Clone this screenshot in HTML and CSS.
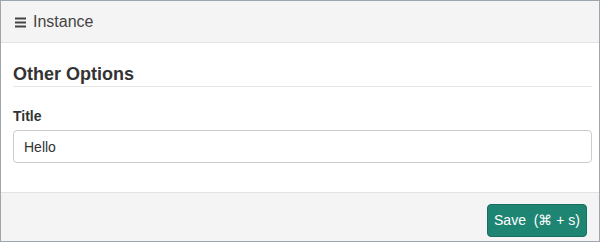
FILE: index.html
```html
<!DOCTYPE html>
<html>
<head>
 <meta charset="utf-8">
 <title>Instance</title>
 <link rel="stylesheet" href="styles.css">
</head>
<body>
<div class="Panel">
 <div class="PanelHeading">
  <svg class="MenuIcon" width="11" height="11" viewBox="0 0 11 11"><rect x="0" y="0.5" width="11" height="2" /><rect x="0" y="4.5" width="11" height="2" /><rect x="0" y="8.5" width="11" height="2" /></svg>
  <span>Instance</span>
 </div>
 <div class="PanelBody">
  <h3 class="Legend">Other Options</h3>
  <label class="FieldLabel" for="title">Title</label>
  <input class="FieldInput" id="title" type="text" value="Hello" />
 </div>
 <div class="PanelFooter">
  <button type="button" class="SaveButton">Save &nbsp;(&#8984; + s)</button>
 </div>
</div>
</body>
</html>
```

FILE: styles.css
```css
html, body {
 margin:0;
 padding:0;
}
body {
 font-family:"Liberation Sans", Helvetica, Arial, sans-serif;
 font-size:14px;
 color:#333333;
 background:#ffffff;
}

.Panel {
 width:600px;
 height:242px;
 box-sizing:border-box;
 border:1px solid #9da6b0;
 display:flex;
 flex-direction:column;
}
.PanelHeading {
 height:41px;
 padding:0 14px;
 background:#f4f4f4;
 border-bottom:1px solid #e3e3e3;
 font-size:16px;
 color:#444444;
 display:flex;
 align-items:center;
 gap:7px;
}
.MenuIcon {
 fill:#444444;
 margin-top:1px;
}
.PanelBody {
 flex:1;
 padding:0 7px 0 12px;
}
.Legend {
 margin:20px 0 0 0;
 padding-bottom:1px;
 border-bottom:1px solid #e8e8e8;
 font-size:18px;
 font-weight:bold;
 line-height:22px;
 color:#333333;
}
.FieldLabel {
 display:block;
 margin:21px 0 5px 0;
 font-weight:bold;
 font-size:14px;
 line-height:17px;
}
.FieldInput {
 display:block;
 width:100%;
 height:33px;
 box-sizing:border-box;
 padding:0 10px;
 border:1px solid #cccccc;
 border-radius:4px;
 font-family:inherit;
 font-size:14px;
 color:#333333;
}
.PanelFooter {
 height:48px;
 background:#f4f4f4;
 border-top:1px solid #e3e3e3;
 display:flex;
 justify-content:flex-end;
 align-items:center;
 padding:0 12px;
}
.SaveButton {
 width:100px;
 height:33px;
 padding:0;
 margin-top:6px;
 border:1px solid #176e5f;
 border-radius:4px;
 background:#1f8573;
 color:#ffffff;
 font-family:inherit;
 font-size:14px;
}
```
